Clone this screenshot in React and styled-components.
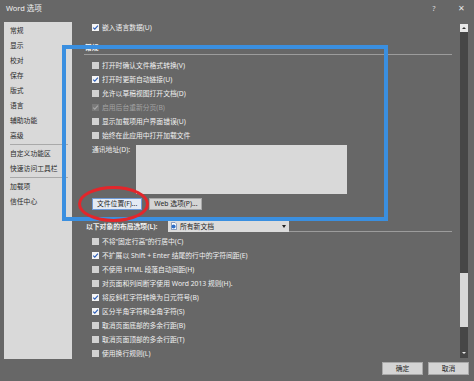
import React from 'react';
import styled, { createGlobalStyle } from 'styled-components';

const GlobalStyle = createGlobalStyle`
  html, body {
    margin: 0;
    padding: 0;
    background: #676767;
  }
  body {
    font-family: "Noto Sans", "Noto Sans CJK SC", sans-serif;
    font-size: 6.8px;
    color: #efefef;
  }
`;

const navItems = [
    '常规', '显示', '校对', '保存', '版式', '语言', '辅助功能', '高级',
    '-', '自定义功能区', '快速访问工具栏', '-', '加载项', '信任中心',
];

const generalOptions = [
    { label: '打开时确认文件格式转换(V)' },
    { label: '打开时更新自动链接(U)', checked: true },
    { label: '允许以草稿视图打开文档(D)' },
    { label: '启用后台重新分页(B)', checked: true, disabled: true },
    { label: '显示加载项用户界面错误(U)' },
    { label: '始终在此应用中打开加载文件' },
];

const layoutOptions = [
    { label: '不将“固定行高”的行居中(C)' },
    { label: '不扩展以 Shift + Enter 结尾的行中的字符间距(E)', checked: true },
    { label: '不使用 HTML 段落自动间距(H)' },
    { label: '对页面和列间断字使用 Word 2013 规则(H).' },
    { label: '将反斜杠字符转换为日元符号(B)', checked: true },
    { label: '区分半角字符和全角字符(S)', checked: true },
    { label: '取消页面底部的多余行距(B)' },
    { label: '取消页面顶部的多余行距(T)' },
    { label: '使用换行规则(L)' },
];

function Check({ checked, disabled }) {
    return (
        <Box $checked={checked} $disabled={disabled}>
            {checked && (
                <svg width="7" height="7" viewBox="0 0 7 7">
                    <path d="M1.2 3.6 L2.8 5.2 L5.9 1.6" fill="none"
                        stroke={disabled ? '#a8a8a8' : '#2a5cb8'} strokeWidth="1.1" />
                </svg>
            )}
        </Box>
    );
}

function Option({ label, checked, disabled }) {
    return (
        <Row $disabled={disabled}>
            <Check checked={checked} disabled={disabled} />
            <span>{label}</span>
        </Row>
    );
}

export default function App() {
    return (
        <Window>
            <GlobalStyle />
            <TitleBar>
                <span>Word 选项</span>
                <Help>?</Help>
                <Close>✕</Close>
            </TitleBar>

            <Main>
                <Nav>
                    {navItems.map((item, i) =>
                        item === '-' ? <NavRule key={i} /> : <NavItem key={i}>{item}</NavItem>
                    )}
                </Nav>

                <Content>
                    <Option label="嵌入语言数据(U)" checked />

                    <SectionHeader>常规</SectionHeader>
                    {generalOptions.map(o => <Option key={o.label} {...o} />)}

                    <AddressRow>
                        <AddressLabel>通讯地址(D):</AddressLabel>
                        <AddressBox />
                    </AddressRow>

                    <ButtonRow>
                        <Button $focused>文件位置(F)...</Button>
                        <Button>Web 选项(P)...</Button>
                    </ButtonRow>

                    <LayoutHeader>
                        <LayoutLabel>以下对象的布局选项(L):</LayoutLabel>
                        <Select>
                            <svg width="8" height="8" viewBox="0 0 8 8">
                                <path d="M1.5 0.5 H5 L6.5 2 V7.5 H1.5 Z" fill="#fff" stroke="#4a6aa0" strokeWidth="0.6" />
                                <circle cx="3.6" cy="4.6" r="2" fill="#2f6fc7" />
                            </svg>
                            <span>所有新文档</span>
                            <Caret />
                        </Select>
                        <HeaderLine />
                    </LayoutHeader>
                    <LayoutList>
                        {layoutOptions.map(o => <Option key={o.label} {...o} />)}
                    </LayoutList>
                </Content>

                <ScrollBar>
                    <ScrollArrow $up />
                    <Track>
                        <Thumb />
                    </Track>
                    <ScrollArrow />
                </ScrollBar>
            </Main>

            <Footer>
                <Button $footer>确定</Button>
                <Button $footer>取消</Button>
            </Footer>

            <Highlight />
            <Circle />
        </Window>
    );
}

const Window = styled.div`
  position: relative;
  width: 474px;
  height: 381px;
  overflow: hidden;
  display: flex;
  flex-direction: column;
`;

const TitleBar = styled.div`
  height: 20px;
  flex: none;
  display: flex;
  align-items: flex-start;
  box-sizing: border-box;
  padding: 3px 0 0 6px;
  line-height: 10px;
  font-size: 7.5px;
  color: #f0f0f0;
`;

const Help = styled.span`
  margin-left: auto;
  width: 10px;
  text-align: center;
  color: #dcdcdc;
`;

const Close = styled.span`
  width: 14px;
  margin: 0 6px 0 15px;
  text-align: center;
  font-size: 8px;
  color: #e6e6e6;
`;

const Main = styled.div`
  flex: none;
  height: 340px;
  display: flex;
`;

const Nav = styled.div`
  flex: none;
  width: 68px;
  height: 337px;
  margin: 2px 0 0 4px;
  box-sizing: border-box;
  padding-top: 1px;
  background: #d9d9d9;
  display: flex;
  flex-direction: column;
`;

const NavItem = styled.div`
  height: 15px;
  line-height: 15px;
  padding-left: 6px;
  color: #2b2b2b;
  white-space: nowrap;
`;

const NavRule = styled.div`
  height: 1px;
  margin: 1px 4px 1px 6px;
  background: #a9a9a9;
`;

const Content = styled.div`
  flex: none;
  width: 388px;
  box-sizing: border-box;
  padding: 0 8px 0 12px;
  overflow: hidden;
  display: flex;
  flex-direction: column;
`;

const Row = styled.div`
  height: 14px;
  flex: none;
  display: flex;
  align-items: center;
  gap: 3px;
  padding-left: 8px;
  white-space: nowrap;
  color: ${p => (p.$disabled ? '#a2a2a2' : '#f0f0f0')};
`;

const Box = styled.span`
  flex: none;
  width: 7px;
  height: 7px;
  display: flex;
  background: ${p => (p.$disabled ? '#7a7a7a' : p.$checked ? '#f4f4f4' : '#d2d2d2')};
`;

const SectionHeader = styled.div`
  height: 17px;
  margin-top: 4px;
  box-sizing: border-box;
  border-bottom: 1px solid #9c9c9c;
  padding: 3px 0 0 1px;
  line-height: 13px;
  font-weight: bold;
  margin-bottom: 3px;
`;

const AddressRow = styled.div`
  display: flex;
  margin-top: 3px;
  padding-left: 8px;
`;

const AddressLabel = styled.div`
  width: 44px;
  line-height: 9px;
  white-space: nowrap;
`;

const AddressBox = styled.div`
  width: 211px;
  height: 49px;
  background: #d9d9d9;
`;

const ButtonRow = styled.div`
  display: flex;
  gap: 7px;
  margin-top: 4px;
  padding-left: 8px;
`;

const Button = styled.button`
  box-sizing: border-box;
  width: ${p => (p.$footer ? '41px' : 'auto')};
  height: ${p => (p.$footer ? '13px' : '12px')};
  padding: 0 4px;
  font: inherit;
  line-height: 10px;
  color: #262626;
  background: ${p => (p.$focused ? '#e4eaf3' : '#d4d4d4')};
  border: 1px solid ${p => (p.$focused ? '#6f9ad6' : '#a8a8a8')};
  border-radius: 0;
  white-space: nowrap;
`;

const LayoutHeader = styled.div`
  height: 14px;
  margin-top: 10px;
  display: flex;
  align-items: center;
`;

const LayoutLabel = styled.div`
  width: 84px;
  padding-left: 2px;
  box-sizing: border-box;
  font-weight: bold;
  white-space: nowrap;
`;

const Select = styled.div`
  width: 121px;
  height: 12px;
  box-sizing: border-box;
  display: flex;
  align-items: center;
  gap: 2px;
  padding: 0 3px 0 2px;
  background: #dcdcdc;
  color: #262626;
`;

const Caret = styled.span`
  margin-left: auto;
  width: 0;
  height: 0;
  border-left: 2.5px solid transparent;
  border-right: 2.5px solid transparent;
  border-top: 3px solid #222;
`;

const HeaderLine = styled.div`
  flex: 1;
  align-self: stretch;
  border-bottom: 1px solid #9c9c9c;
`;

const LayoutList = styled.div`
  display: flex;
  flex-direction: column;
  margin-top: 2px;
`;

const ScrollBar = styled.div`
  flex: none;
  width: 8px;
  height: 334px;
  margin-top: 4px;
  display: flex;
  flex-direction: column;
  background: #464646;
`;

const ScrollArrow = styled.div`
  flex: none;
  height: 8px;
  margin: ${p => (p.$up ? '0' : '0 0 1px')};
  background: ${p => (p.$up ? '#e8e8e8' : '#464646')};
  display: flex;
  align-items: center;
  justify-content: center;
  &::after {
    content: '';
    width: 0;
    height: 0;
    border-left: 2px solid transparent;
    border-right: 2px solid transparent;
    ${p => (p.$up ? 'border-bottom: 2.5px solid #333;' : 'border-top: 2.5px solid #e8e8e8;')}
  }
`;

const Track = styled.div`
  flex: 1;
  display: flex;
  flex-direction: column;
  justify-content: flex-end;
  padding-bottom: 22px;
`;

const Thumb = styled.div`
  height: 54px;
  background: #d9d9d9;
`;

const Footer = styled.div`
  flex: 1;
  display: flex;
  justify-content: flex-end;
  align-items: flex-start;
  gap: 5px;
  padding: 2px 5px 0 0;
`;

const Highlight = styled.div`
  position: absolute;
  left: 62px;
  top: 45px;
  width: 326px;
  height: 176px;
  box-sizing: border-box;
  border: 4px solid #3a8fe0;
  pointer-events: none;
`;

const Circle = styled.div`
  position: absolute;
  left: 78px;
  top: 186px;
  width: 71px;
  height: 36px;
  box-sizing: border-box;
  border: 3px solid #e3262b;
  border-radius: 50%;
  pointer-events: none;
`;
